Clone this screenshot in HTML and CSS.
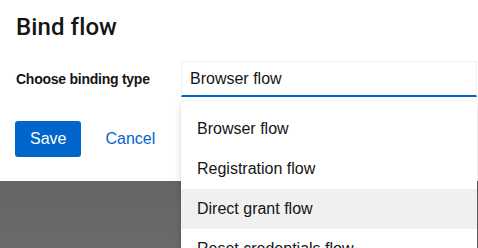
FILE: index.html
```html
<!DOCTYPE html>
<html>
<head>
<meta charset="utf-8">
<link rel="stylesheet" href="styles.css">
</head>
<body>
<div class="backdrop">
  <div class="modal">
    <h1 class="title">Bind flow</h1>
    <div class="form-row">
      <label class="label">Choose binding type</label>
      <div class="select-wrap">
        <div class="select">Browser flow</div>
        <ul class="menu">
          <li class="item">Browser flow</li>
          <li class="item">Registration flow</li>
          <li class="item hover">Direct grant flow</li>
          <li class="item">Reset credentials flow</li>
        </ul>
      </div>
    </div>
    <div class="footer">
      <button class="btn-primary">Save</button>
      <button class="btn-link">Cancel</button>
    </div>
  </div>
</div>
</body>
</html>
```
FILE: styles.css
```css
* { box-sizing: border-box; }
html, body { margin: 0; padding: 0; }
body {
  width: 478px;
  height: 248px;
  overflow: hidden;
  font-family: "Liberation Sans", Arial, sans-serif;
  color: #151515;
}
.backdrop {
  height: 248px;
  background: linear-gradient(#595959, #6a6a6a);
}
.modal {
  background: #fff;
  padding: 12px 0 24px 16px;
  height: 181px;
}
.title {
  margin: 0;
  font-family: Roboto, "Liberation Sans", sans-serif;
  font-size: 24px;
  line-height: 31px;
  font-weight: 500;
  letter-spacing: 0.1px;
}
.form-row {
  display: grid;
  grid-template-columns: 165px 296px;
  align-items: center;
  margin-top: 18px;
}
.label {
  font-size: 14px;
  font-weight: 700;
  line-height: 20px;
  letter-spacing: -0.25px;
}
.select-wrap { position: relative; }
.select {
  height: 36px;
  border: 1px solid #f0f0f0;
  border-bottom: 2px solid #0066cc;
  padding: 0 8px;
  font-size: 16px;
  line-height: 33px;
}
.menu {
  position: absolute;
  top: 40px;
  left: 0;
  width: 296px;
  margin: 0;
  padding: 8px 0;
  list-style: none;
  background: #fff;
  box-shadow: 0 4px 8px 0 rgba(3,3,3,0.12), 0 0 4px 0 rgba(3,3,3,0.06);
}
.item {
  height: 40px;
  padding: 8px 16px;
  font-size: 16px;
  line-height: 24px;
}
.item.hover { background: #f0f0f0; }
.footer {
  display: flex;
  align-items: center;
  gap: 8px;
  margin-top: 24px;
}
.btn-primary {
  height: 36px;
  padding: 0 15px;
  margin-left: -1px;
  border: 0;
  border-radius: 3px;
  background: #0066cc;
  color: #fff;
  font-family: inherit;
  font-size: 16px;
}
.btn-link {
  height: 36px;
  padding: 0 16px;
  border: 0;
  background: transparent;
  color: #0066cc;
  font-family: inherit;
  font-size: 16px;
}
```
